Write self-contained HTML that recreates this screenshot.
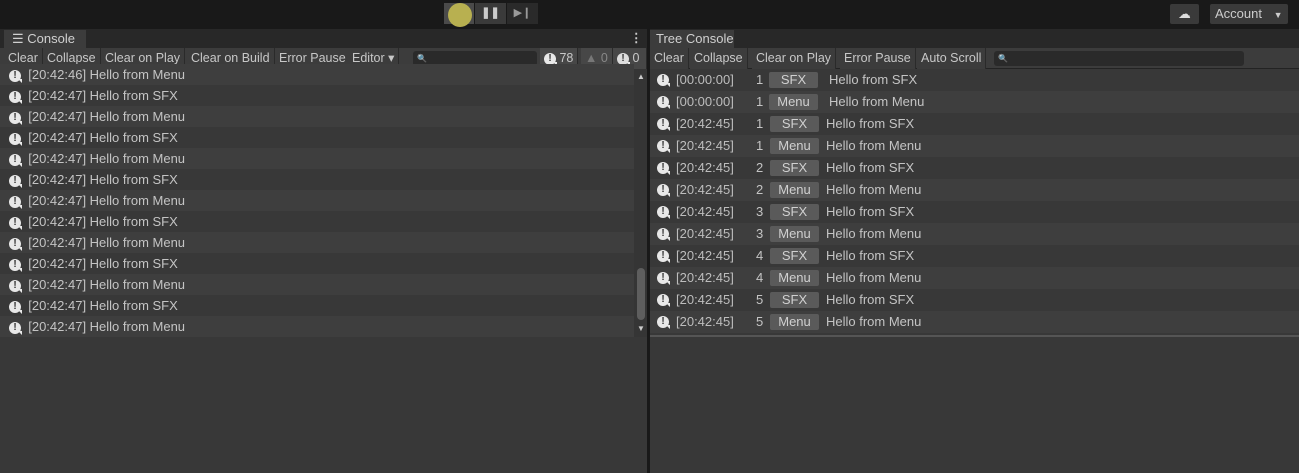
<!DOCTYPE html>
<html><head><meta charset="utf-8"><style>
*{margin:0;padding:0;box-sizing:border-box}
body{width:1299px;height:473px;background:#191919;position:relative;overflow:hidden;font-family:"Liberation Sans",sans-serif;font-size:12.5px;color:#c4c4c4}
.a{position:absolute;white-space:nowrap}
.btn{position:absolute;top:48px;height:21px;line-height:21px;padding:0 4px;border-right:1px solid #2a2a2a;color:#c8c8c8;background:#3c3c3c;white-space:nowrap}
.ico{display:inline-block;width:12px;height:12px;border-radius:50%;background:#e8e8e8;color:#333;font-weight:bold;font-size:10px;line-height:12px;text-align:center;vertical-align:middle;position:relative}
.ico:after{content:"";position:absolute;right:-1px;bottom:-1px;border-left:4px solid transparent;border-top:4px solid #e8e8e8}
.row{position:absolute;left:0;height:21px;line-height:21px;white-space:nowrap;padding-left:9px;font-size:13px}
.rr{position:absolute;left:650px;width:649px;height:22px;line-height:22px;white-space:nowrap;font-size:13px}
.tag{position:absolute;top:3px;height:16px;line-height:16px;width:49px;text-align:center;background:#5a5a5a;border-radius:2px;color:#d0d0d0}
</style></head><body>
<div class="a" style="left:444px;top:3px;width:30px;height:21px;background:#4a4a4a"></div>
<div class="a" style="left:448px;top:3px;width:24px;height:24px;border-radius:50%;background:#b8b050"></div>
<div class="a" style="left:475px;top:3px;width:31px;height:21px;background:#3a3a3a;color:#ccc;text-align:center;line-height:21px;font-weight:bold;font-size:11px">❚❚</div>
<div class="a" style="left:507px;top:3px;width:31px;height:21px;background:#2a2a2a;color:#999;text-align:center;line-height:21px;font-size:11px">▶❙</div>
<div class="a" style="left:1170px;top:4px;width:29px;height:20px;background:#3a3a3a;border-radius:2px;color:#ddd;text-align:center;line-height:20px">☁</div>
<div class="a" style="left:1210px;top:4px;width:78px;height:20px;background:#3a3a3a;border-radius:2px;color:#ccc;line-height:20px;padding-left:5px;font-size:13px">Account <span style="font-size:9px;margin-left:8px">▼</span></div>
<div class="a" style="left:0;top:29px;width:647px;height:444px;background:#383838"></div>
<div class="a" style="left:0;top:29px;width:647px;height:19px;background:#282828"></div>
<div class="a" style="left:4px;top:30px;width:82px;height:18px;background:#3c3c3c;line-height:18px;padding-left:8px;color:#d0d0d0;font-size:13px">☰ Console</div>
<div class="a" style="left:630px;top:30px;color:#ccc;font-weight:bold">⋮</div>
<div class="a" style="left:0;top:48px;width:647px;height:21px;background:#3c3c3c;border-bottom:1px solid #232323"></div>
<div class="btn" style="left:4px">Clear</div>
<div class="btn" style="left:43px">Collapse</div>
<div class="btn" style="left:101px">Clear on Play</div>
<div class="btn" style="left:187px">Clear on Build</div>
<div class="btn" style="left:275px">Error Pause</div>
<div class="btn" style="left:348px">Editor ▾</div>
<div class="a" style="left:413px;top:51px;width:124px;height:15px;background:#2a2a2a;border-radius:3px;font-size:8px;color:#aaa;padding-left:4px;line-height:15px">🔍</div>
<div class="btn" style="left:540px;background:#474747;padding:0 4px"><span class="ico">!</span> 78</div>
<div class="btn" style="left:581px;background:#474747;color:#888"><span style="color:#777">▲</span> 0</div>
<div class="btn" style="left:613px;background:#474747;width:34px"><span class="ico" style="background:#ddd">!</span> 0</div>
<div id="L"></div>
<div class="a" style="left:634px;top:69px;width:13px;height:268px;background:#353535"></div>
<div class="a" style="left:637px;top:268px;width:8px;height:52px;background:#5e5e5e;border-radius:4px"></div>
<div class="a" style="left:637px;top:72px;font-size:8px;color:#ccc">▲</div>
<div class="a" style="left:637px;top:324px;font-size:8px;color:#ccc">▼</div>
<div class="a" style="left:647px;top:29px;width:3px;height:444px;background:#191919"></div>
<div class="a" style="left:650px;top:29px;width:649px;height:444px;background:#383838"></div>
<div class="a" style="left:650px;top:29px;width:649px;height:19px;background:#282828"></div>
<div class="a" style="left:650px;top:30px;width:84px;height:18px;background:#3c3c3c;line-height:18px;padding-left:6px;color:#d0d0d0;font-size:13px">Tree Console</div>
<div class="a" style="left:650px;top:48px;width:649px;height:21px;background:#3c3c3c;border-bottom:1px solid #232323"></div>
<div class="btn" style="left:650px">Clear</div>
<div class="btn" style="left:690px">Collapse</div>
<div class="btn" style="left:752px">Clear on Play</div>
<div class="btn" style="left:840px">Error Pause</div>
<div class="btn" style="left:917px">Auto Scroll</div>
<div class="a" style="left:994px;top:51px;width:250px;height:15px;background:#2a2a2a;border-radius:3px;font-size:8px;color:#aaa;padding-left:4px;line-height:15px">🔍</div>
<div id="R"></div>
<div class="a" style="left:650px;top:335px;width:649px;height:2px;background:#555"></div>
<script>
var L='',y=64;
for(var i=0;i<13;i++){var m=i%2==0?'Menu':'SFX';var t=i==0?'[20:42:46]':'[20:42:47]';
L+='<div class="row" style="top:'+y+'px;width:634px;background:'+(i%2?'#383838':'#3e3e3e')+'"><span class="ico">!</span>&nbsp; '+t+' Hello from '+m+'</div>';y+=21;}
document.getElementById('L').innerHTML=L;
var R='';y=69;
for(var i=0;i<12;i++){var m=i%2?'Menu':'SFX';var t=i<2?'[00:00:00]':'[20:42:45]';var n=i<2?1:Math.floor((i-2)/2)+1;
R+='<div class="rr" style="top:'+y+'px;background:'+(i%2?'#3e3e3e':'#383838')+'"><span class="ico" style="position:absolute;left:7px;top:5px">!</span><span class="a" style="left:26px;color:#bdbdbd">'+t+'</span><span class="a" style="left:106px">'+n+'</span><span class="tag" style="left:'+(i<2?119:120)+'px">'+m+'</span><span class="a" style="left:'+(i<2?179:176)+'px">Hello from '+m+'</span></div>';y+=22;}
document.getElementById('R').innerHTML=R;
</script>
</body></html>
